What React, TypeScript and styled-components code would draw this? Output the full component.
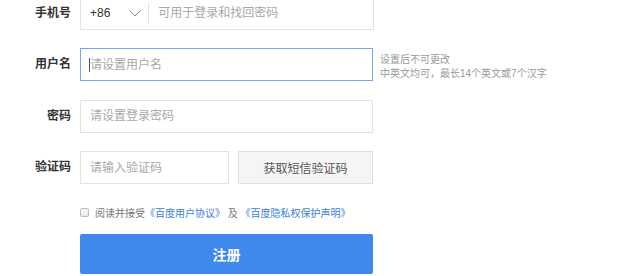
import React from 'react';
import styled, { createGlobalStyle } from 'styled-components';

const GlobalStyle = createGlobalStyle`
  html, body {
    margin: 0;
    padding: 0;
    background: #fff;
    overflow: hidden;
  }
  body {
    font-family: "Liberation Sans", "Noto Sans CJK SC", sans-serif;
  }
`;

const Form = styled.form`
  display: flex;
  flex-direction: column;
  margin-top: -3.5px;
  width: 620px;
`;

const Row = styled.div`
  display: flex;
  align-items: flex-start;
  height: 33px;
  margin-bottom: 18.5px;
`;

const Label = styled.label`
  width: 71px;
  margin-right: 9px;
  line-height: 33px;
  text-align: right;
  font-size: 12px;
  font-weight: bold;
  color: #333;
  flex-shrink: 0;
`;

const Box = styled.div<{ $width: number; $focused?: boolean }>`
  position: relative;
  box-sizing: border-box;
  width: ${p => p.$width}px;
  height: 33px;
  border: 1px solid ${p => (p.$focused ? '#72a8f3' : '#e2e2e2')};
  display: flex;
  align-items: center;
  background: #fff;
`;

const Input = styled.input`
  flex: 1;
  min-width: 0;
  height: 100%;
  border: 0;
  outline: none;
  padding: 0 0 0 9px;
  font-family: "Liberation Sans", "Noto Sans CJK SC", sans-serif;
  font-size: 12px;
  color: #333;
  background: transparent;
  &::placeholder {
    color: #a8a8a8;
  }
`;

const Caret = styled.span`
  position: absolute;
  left: 8px;
  top: 9px;
  width: 1px;
  height: 14px;
  background: #555;
`;

const Country = styled.div`
  display: flex;
  align-items: center;
  height: 100%;
  padding-left: 9px;
  font-size: 12px;
  color: #333;
`;

const Chevron = styled.svg`
  margin-left: 19px;
  margin-right: 7px;
`;

const Divider = styled.span`
  width: 1px;
  height: 20px;
  background: #e2e2e2;
`;

const Hint = styled.div`
  margin-left: 7px;
  padding-top: 5px;
  font-size: 10px;
  line-height: 14px;
  color: #999;
`;

const SmsButton = styled.button`
  box-sizing: border-box;
  width: 135px;
  height: 33px;
  margin-left: 9px;
  border: 1px solid #e0e0e0;
  background: #f5f5f5;
  font-family: "Liberation Sans", "Noto Sans CJK SC", sans-serif;
  font-size: 12px;
  color: #555;
  cursor: pointer;
`;

const AgreeRow = styled.div`
  display: flex;
  align-items: center;
  height: 16px;
  margin-top: 1.5px;
  padding-left: 80px;
  font-size: 10px;
  color: #777;
  white-space: pre;
`;

const Check = styled.span`
  box-sizing: border-box;
  width: 9px;
  height: 9px;
  margin-right: 6px;
  border: 1px solid #bdbdbd;
  border-radius: 2px;
  background: linear-gradient(#fafafa, #e8e8e8);
`;

const Link = styled.a`
  color: #3b7de0;
  text-decoration: none;
`;

const Submit = styled.button`
  width: 293px;
  height: 40px;
  margin: 14px 0 0 80px;
  border: 0;
  border-radius: 2px;
  background: #3f89ec;
  color: #fff;
  font-family: "Liberation Sans", "Noto Sans CJK SC", sans-serif;
  font-size: 14px;
  font-weight: bold;
  cursor: pointer;
`;

const App: React.FC = () => {
  return (
    <>
      <GlobalStyle />
      <Form onSubmit={e => e.preventDefault()}>
        <Row>
          <Label>手机号</Label>
          <Box $width={294}>
            <Country>
              +86
              <Chevron width="12" height="7" viewBox="0 0 12 7">
                <polyline points="0.5,0.5 6,6 11.5,0.5" fill="none" stroke="#8a8a8a" strokeWidth="1" />
              </Chevron>
            </Country>
            <Divider />
            <Input placeholder="可用于登录和找回密码" />
          </Box>
        </Row>
        <Row>
          <Label>用户名</Label>
          <Box $width={293} $focused>
            <Input placeholder="请设置用户名" />
            <Caret />
          </Box>
          <Hint>
            设置后不可更改
            <br />
            中英文均可，最长14个英文或7个汉字
          </Hint>
        </Row>
        <Row>
          <Label>密码</Label>
          <Box $width={293}>
            <Input type="password" placeholder="请设置登录密码" />
          </Box>
        </Row>
        <Row>
          <Label>验证码</Label>
          <Box $width={149}>
            <Input placeholder="请输入验证码" />
          </Box>
          <SmsButton type="button">获取短信验证码</SmsButton>
        </Row>
        <AgreeRow>
          <Check />
          阅读并接受<Link href="#">《百度用户协议》</Link>{' 及 '}<Link href="#">《百度隐私权保护声明》</Link>
        </AgreeRow>
        <Submit type="submit">注册</Submit>
      </Form>
    </>
  );
};

export default App;
